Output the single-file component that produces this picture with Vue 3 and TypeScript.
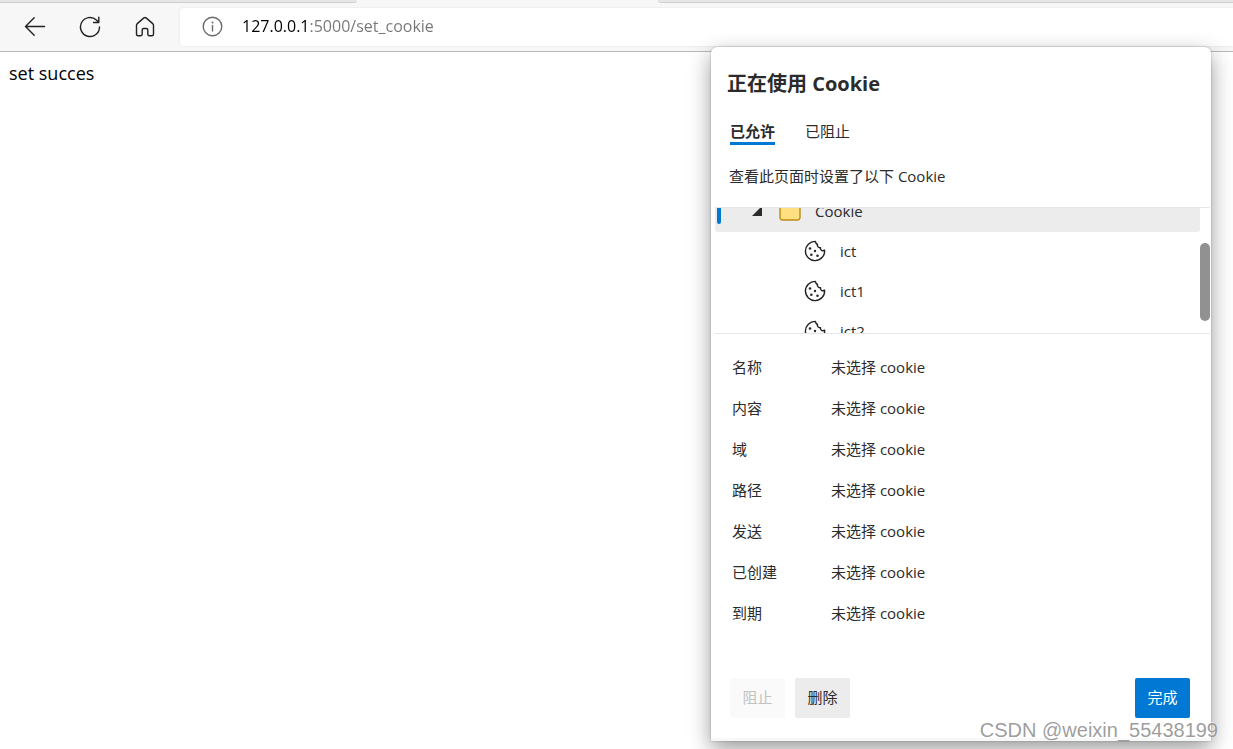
<script setup lang="ts">
import { ref } from 'vue'

const address = ref('127.0.0.1:5000/set_cookie')
const tab = ref<'allowed' | 'blocked'>('allowed')
const cookies: string[] = ['ict', 'ict1', 'ict2']
const fields: string[] = ['名称', '内容', '域', '路径', '发送', '已创建', '到期']
</script>

<template>
  <div class="browser">
    <div class="tabstrip">
      <div class="tab tab-left"></div>
      <div class="tab-active"></div>
      <div class="tab tab-right"></div>
    </div>
    <header class="toolbar">
      <button class="nav" type="button" aria-label="后退">
        <svg width="24" height="24" viewBox="0 0 24 24"><path d="M21.500 11.500H2.500M11.200 2.800L2.500 11.500l8.700 8.700" /></svg>
      </button>
      <button class="nav" type="button" aria-label="刷新">
        <svg width="24" height="24" viewBox="0 0 24 24"><path d="M21.5 12a9.5 9.5 0 1 1-3.1-7L20.8 7.4M20.8 2.2v5.3h-5.3" /></svg>
      </button>
      <button class="nav" type="button" aria-label="主页">
        <svg width="24" height="24" viewBox="0 0 24 24"><path d="M3.5 10.2c0-.7.3-1.2.8-1.6l6.600-5.700c.7-.6 1.500-.6 2.200 0l6.600 5.700c.5.4.8.9.8 1.600v9c0 .9-.6 1.500-1.500 1.500h-2.800c-.8 0-1.400-.6-1.400-1.400v-4.400c0-.8-.6-1.400-1.400-1.400h-2.800c-.8 0-1.400.6-1.400 1.400v4.400c0 .8-.6 1.400-1.400 1.400H5c-.9 0-1.500-.6-1.500-1.500z" /></svg>
      </button>
      <div class="address">
        <button class="site-info" type="button" aria-label="查看站点信息">
          <svg width="22" height="22" viewBox="0 0 22 22"><circle cx="10.500" cy="10.500" r="9.300" /><path d="M10.500 9.500v5.500" /><circle class="dot" cx="10.500" cy="6.500" r="1" /></svg>
        </button>
        <input v-model="address" class="url" type="text" aria-label="地址" spellcheck="false" />
      </div>
    </header>
    <main class="page">set succes</main>

    <section class="dialog" role="dialog" aria-labelledby="dialog-title">
      <h1 id="dialog-title">正在使用 Cookie</h1>
      <div class="tabs" role="tablist">
        <button type="button" role="tab" :aria-selected="tab === 'allowed'" :class="{ selected: tab === 'allowed' }" @click="tab = 'allowed'">已允许</button>
        <button type="button" role="tab" :aria-selected="tab === 'blocked'" :class="{ selected: tab === 'blocked' }" @click="tab = 'blocked'">已阻止</button>
      </div>
      <p class="hint">查看此页面时设置了以下 Cookie</p>
      <div class="tree-view">
        <ul class="tree" role="tree">
          <li class="row folder" role="treeitem" aria-expanded="true" aria-selected="true">
            <span class="marker"></span>
            <svg class="caret" width="12" height="12" viewBox="0 0 12 12"><path d="M11 1v10H1z" /></svg>
            <svg class="folder-icon" width="22" height="20" viewBox="0 0 22 20"><path d="M1 4a3 3 0 0 1 3-3h4l3 3h7a3 3 0 0 1 3 3v9.500a2.500 2.500 0 0 1-2.500 2.500h-15A2.500 2.500 0 0 1 1 16.500z" /></svg>
            <span>Cookie</span>
          </li>
          <li v-for="name in cookies" :key="name" class="row cookie" role="treeitem">
            <svg class="cookie-icon" width="22" height="22" viewBox="0 0 22 22">
              <path d="M11.300 1.400A9.600 9.600 0 1 0 20.600 10.200c-1.200.8-2.700.8-3.700-.6-.4-.6-.5-1.200-.4-1.900-1.200.2-2.500-.4-3-1.600-.2-.6-.2-1.100 0-1.600-1.200-.6-1.900-1.600-2.200-3.100z" />
              <g class="chips"><circle cx="6" cy="8.500" r="1.300" /><circle cx="11" cy="11" r="1.200" /><circle cx="7.300" cy="14.700" r="1.300" /><circle cx="13.500" cy="15.700" r="1.300" /></g>
            </svg>
            <span>{{ name }}</span>
          </li>
        </ul>
        <div class="scrollbar"></div>
      </div>
      <table class="details">
        <tbody>
          <tr v-for="field in fields" :key="field">
            <th scope="row">{{ field }}</th>
            <td>未选择 cookie</td>
          </tr>
        </tbody>
      </table>
      <footer class="actions">
        <button type="button" disabled>阻止</button>
        <button type="button">删除</button>
        <button type="button" class="primary">完成</button>
      </footer>
    </section>
    <div class="watermark">CSDN @weixin_55438199</div>
  </div>
</template>

<style>
body {
  margin: 0;
}
</style>

<style scoped>
.browser {
  position: relative;
  display: flex;
  flex-direction: column;
  min-height: 100vh;
  overflow: hidden;
  background: #fff;
  color: #2b2b2b;
  font: 15px/20px "Open Sans", "Noto Sans CJK SC", sans-serif;
}
button,
input {
  margin: 0;
  padding: 0;
  border: 0;
  background: none;
  font: inherit;
  color: inherit;
}
svg {
  display: block;
  flex: none;
  fill: none;
  stroke: #222;
  stroke-width: 1.4;
  stroke-linecap: round;
  stroke-linejoin: round;
}
.tabstrip {
  display: flex;
  height: 3px;
  background: #f7f7f7;
}
.tab {
  box-sizing: border-box;
  background: #e6e6e6;
  border-bottom: 1px solid #cfcfcf;
}
.tab-left {
  width: 357px;
  border-bottom-right-radius: 4px;
}
.tab-active {
  width: 301px;
}
.tab-right {
  flex: 1;
  border-bottom-left-radius: 4px;
}
.toolbar {
  display: flex;
  align-items: center;
  height: 48px;
  padding-left: 7px;
  background: #f7f7f7;
  border-bottom: 1px solid #b9b9b9;
}
.nav {
  display: grid;
  place-items: center;
  width: 55px;
  height: 40px;
}
.address {
  display: flex;
  flex: 1;
  align-items: center;
  height: 38px;
  margin-left: 8px;
  padding-left: 22px;
  background: #fff;
  border-radius: 4px 0 0 4px;
  box-shadow: 0 0 3px rgba(0, 0, 0, 0.08);
}
.site-info svg {
  stroke: #6b6b6b;
}
.site-info .dot {
  fill: #6b6b6b;
  stroke: none;
}
.url {
  flex: 1;
  min-width: 0;
  height: 26px;
  padding-bottom: 2px;
  margin-left: 18px;
  outline: none;
  font-size: 16px;
  color: transparent;
  background: linear-gradient(90deg, #000 67px, #767676 67px);
  -webkit-background-clip: text;
  background-clip: text;
}
.page {
  padding: 9px;
  color: #000;
  font-size: 18px;
  line-height: 24px;
}
.dialog {
  position: absolute;
  top: 47px;
  right: 22px;
  box-sizing: border-box;
  width: 500px;
  padding-bottom: 20px;
  background: #fff;
  border-bottom: 3px solid #f7f8f8;
  border-radius: 6px 6px 0 0;
  box-shadow: 0 0 2px rgba(0, 0, 0, 0.3), 0 8px 22px rgba(0, 0, 0, 0.4);
}
h1 {
  margin: 0;
  padding: 23px 16px 0;
  font-size: 20px;
  line-height: 28px;
  font-weight: 700;
}
.tabs {
  display: flex;
  gap: 30px;
  padding: 22px 19px 0;
}
.tabs button {
  height: 25px;
  border-bottom: 3px solid transparent;
}
.tabs .selected {
  border-bottom-color: #0078d4;
  font-weight: 600;
}
.hint {
  margin: 0;
  padding: 21px 18px;
}
.tree-view {
  position: relative;
  height: 125px;
  margin: 0 1px 0 4px;
  overflow: hidden;
  border-top: 1px solid #e6e6e6;
  border-bottom: 1px solid #e6e6e6;
}
.tree {
  margin: -16px 10px 0 0;
  padding: 0;
  list-style: none;
}
.row {
  box-sizing: border-box;
  display: flex;
  align-items: center;
  height: 40px;
  padding-bottom: 2px;
}
.folder {
  position: relative;
  padding-left: 36px;
  border-radius: 3px;
  background: #ececec;
}
.marker {
  position: absolute;
  left: 2px;
  top: 8px;
  width: 4px;
  height: 24px;
  border-radius: 2px;
  background: #0078d4;
}
.caret {
  margin-right: 16px;
}
.caret path {
  fill: #2b2b2b;
  stroke: none;
}
.folder-icon {
  margin-right: 14px;
}
.folder-icon path {
  fill: #ffdf80;
  stroke: #bd8b12;
}
.cookie {
  padding-left: 89px;
}
.cookie-icon {
  margin-right: 14px;
}
.chips circle {
  fill: #2b2b2b;
  stroke: none;
}
.scrollbar {
  position: absolute;
  top: 35px;
  right: 0;
  width: 10px;
  height: 78px;
  border-radius: 5px;
  background: #919191;
}
.details {
  width: 100%;
  margin-top: 12px;
  border-collapse: collapse;
}
.details tr {
  height: 41px;
}
.details th,
.details td {
  padding: 0;
  font-weight: 400;
  text-align: left;
}
.details th {
  width: 99px;
  padding-left: 21px;
}
.actions {
  display: flex;
  gap: 10px;
  padding: 45px 21px 0 19px;
}
.actions button {
  width: 55px;
  height: 40px;
  padding-bottom: 2px;
  border-radius: 2px;
  background: #ececec;
}
.actions button:disabled {
  background: #fafafa;
  color: #c2c2c2;
}
.actions .primary {
  margin-left: auto;
  background: #0078d4;
  color: #fff;
}
.watermark {
  position: absolute;
  right: 15px;
  bottom: 7px;
  font: 20px/24px "Liberation Sans", sans-serif;
  color: rgba(140, 140, 140, 0.85);
  text-shadow: -1px -1px 0 rgba(255, 255, 255, 0.7);
}
</style>
